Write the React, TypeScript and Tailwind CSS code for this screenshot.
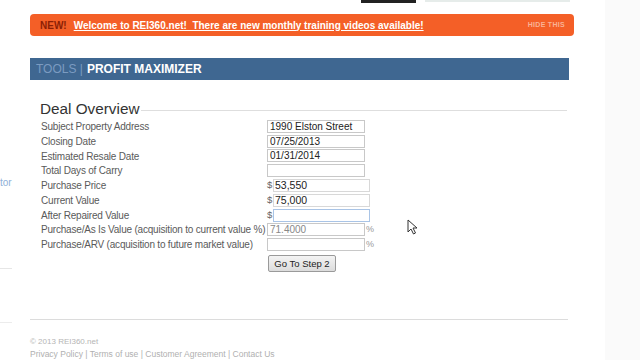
import React from "react";

const rows: { label: string; value: string; prefix?: boolean; suffix?: boolean; bold?: boolean; gray?: boolean; focus?: boolean }[] = [
  { label: "Subject Property Address", value: "1990 Elston Street" },
  { label: "Closing Date", value: "07/25/2013" },
  { label: "Estimated Resale Date", value: "01/31/2014" },
  { label: "Total Days of Carry", value: "" },
  { label: "Purchase Price", value: "53,550", prefix: true, bold: true },
  { label: "Current Value", value: "75,000", prefix: true, bold: true },
  { label: "After Repaired Value", value: "", prefix: true, focus: true },
  { label: "Purchase/As Is Value (acquisition to current value %)", value: "71.4000", suffix: true, gray: true },
  { label: "Purchase/ARV (acquisition to future market value)", value: "", suffix: true },
];

export default function App() {
  return (
    <div className="relative w-[640px] h-[360px] overflow-hidden bg-white" style={{ fontFamily: '"Liberation Sans", Arial, sans-serif' }}>
      {/* top stubs */}
      <div className="absolute left-[361px] top-0 w-[55px] h-[3px] bg-[#222]" />
      <div className="absolute left-[425px] top-0 w-[145px] h-[2px] bg-[#e6ecea]" />
      {/* right texture */}
      <div className="absolute right-0 top-0 w-[35px] h-[360px] bg-[#fafafa]" />
      {/* left edge */}
      <div className="absolute left-0 top-[175px] text-[10px] text-[#8fb0d8]">tor</div>
      <div className="absolute left-0 top-[268px] w-[12px] h-px bg-[#e6e6e6]" />
      <div className="absolute left-0 top-[322px] w-[12px] h-px bg-[#ececec]" />

      <div className="pl-[30px] pt-[14px] w-[575px]">
        {/* banner */}
        <div className="h-[22px] w-[544px] rounded-[4px] bg-[#f45f27] flex items-center pl-[10px] pr-[9px]">
          <span className="text-[10px] font-bold text-[#8c1f05]">NEW!</span>
          <span className="ml-[7px] text-[10px] font-bold text-white underline whitespace-pre">Welcome to REI360.net!  There are new monthly training videos available!</span>
          <span className="ml-auto text-[7px] font-bold text-[#f9b295] tracking-[0.3px]">HIDE THIS</span>
        </div>

        {/* tools bar */}
        <div className="mt-[22px] h-[22px] w-[539px] bg-[#3f6791] flex items-center pl-[6px] text-[12px] font-bold">
          <span className="text-[#7b9bc1] font-normal">TOOLS |</span>
          <span className="ml-[4px] text-white">PROFIT MAXIMIZER</span>
        </div>

        {/* deal overview */}
        <div className="mt-[20px] ml-[10px] w-[527px] flex items-center">
          <span className="text-[15.3px] leading-[18px] text-[#333]">Deal Overview</span>
          <div className="flex-1 h-px bg-[#dedede] ml-[2px] mt-[2px]" />
        </div>

        <div className="ml-[11px] mt-[1px] flex flex-col">
          {rows.map((r) => (
            <div key={r.label} className="h-[14.8px] flex items-center text-[10px]">
              <span className="w-[226px] text-[#5a5a5a] whitespace-nowrap tracking-[-0.2px]">{r.label}</span>
              {r.prefix ? (
                <div className="flex items-center">
                  <span className="w-[6px] text-[#666] text-[9.5px]">$</span>
                  <div className={`w-[97px] h-[13px] border ${r.focus ? "border-[#a9c4e6]" : "border-[#d8d8d8]"} bg-white flex items-center pl-[1px] text-[10.5px] text-[#222]`}>
                    {r.value}
                  </div>
                </div>
              ) : (
                <div className="flex items-center">
                  <div className={`w-[98px] h-[13px] border border-[#c8c8c8] bg-white flex items-center pl-[2px] text-[10px] ${r.gray ? "text-[#888]" : "text-[#222]"}`}>
                    {r.value}
                  </div>
                  {r.suffix && <span className="ml-[1px] text-[9px] text-[#999]">%</span>}
                </div>
              )}
            </div>
          ))}
          <div className="ml-[227px] mt-[3px]">
            <div className="w-[68px] h-[17px] rounded-[2px] border border-[#9a9a9a] bg-gradient-to-b from-[#f4f4f4] to-[#dcdcdc] flex items-center justify-center text-[9.5px] text-[#222]">
              Go To Step 2
            </div>
          </div>
        </div>

        {/* footer */}
        <div className="mt-[47px] w-[538px] h-px bg-[#dcdcdc]" />
        <div className="mt-[17px] text-[8px] leading-[10px] text-[#b5b5b5]">© 2013 REI360.net</div>
        <div className="mt-[2px] text-[8.5px] leading-[10px] text-[#b0b0b0] whitespace-nowrap">Privacy Policy | Terms of use | Customer Agreement | Contact Us</div>
      </div>

      {/* cursor */}
      <svg className="absolute left-[407px] top-[219px]" width="11" height="16" viewBox="0 0 11 16">
        <path d="M1 1 L1 13 L4 10 L6.5 15 L8.5 14 L6 9 L10 9 Z" fill="#fff" stroke="#333" strokeWidth="1" strokeLinejoin="round" />
      </svg>
    </div>
  );
}
